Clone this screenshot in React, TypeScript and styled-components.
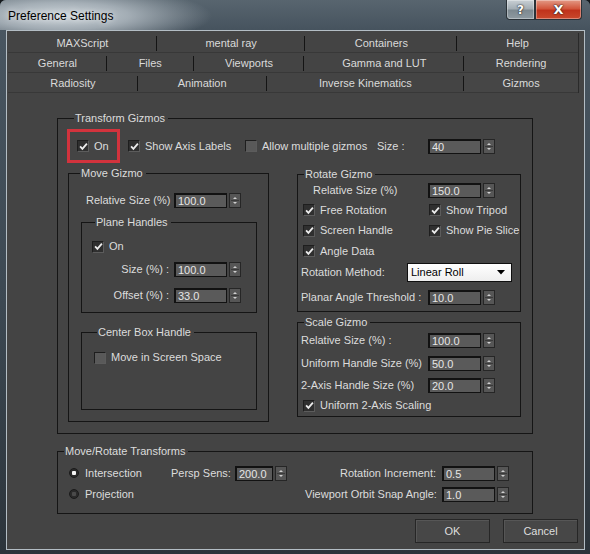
import React from "react";
import styled, { createGlobalStyle } from "styled-components";

const GlobalStyle = createGlobalStyle`
  html, body { margin: 0; padding: 0; background: #15191d; }
  body { font-family: "Liberation Sans", Arial, sans-serif; font-size: 11px; color: #dcdcdc; }
  * { box-sizing: border-box; }
`;

const Window = styled.div`
  width: 590px;
  height: 554px;
  display: flex;
  flex-direction: column;
  border-radius: 6px 6px 0 0;
  overflow: hidden;
  background: linear-gradient(180deg, #4a5762 0%, #3c4852 55%, #2c343b 100%);
`;

const TitleBar = styled.div`
  height: 30px;
  flex: none;
  display: flex;
  align-items: flex-start;
  background:
    radial-gradient(ellipse 150px 30px at 62px 16px, rgba(214, 221, 226, 0.95) 0%, rgba(190, 199, 206, 0.75) 45%, rgba(150, 160, 168, 0) 100%),
    linear-gradient(180deg, #58656f 0%, #46535e 100%);
`;

const Title = styled.div`
  padding: 9px 0 0 8px;
  font-size: 12px;
  line-height: 15px;
  color: #000;
  text-shadow: 0 0 6px rgba(255, 255, 255, 0.9);
`;

const Captions = styled.div`
  margin-left: auto;
  margin-right: 8px;
  display: flex;
`;

const CaptionButton = styled.div<{ $w: number; $close?: boolean }>`
  width: ${(p) => p.$w}px;
  height: 20px;
  display: flex;
  align-items: center;
  justify-content: center;
  border: 1px solid #2a3238;
  border-top: none;
  border-radius: ${(p) => (p.$close ? "0 0 4px 0" : "0 0 0 4px")};
  background: ${(p) =>
    p.$close
      ? "linear-gradient(180deg, #e39a86 0%, #d2573d 45%, #c0331c 55%, #c9492c 100%)"
      : "linear-gradient(180deg, #c9d0d5 0%, #a4aeb5 45%, #7d8990 55%, #8e9aa1 100%)"};
  box-shadow: inset 0 0 0 1px rgba(255, 255, 255, 0.35);
  font-family: "DejaVu Sans", sans-serif;
  font-weight: bold;
  font-size: ${(p) => (p.$close ? 13 : 12)}px;
  color: #fff;
  text-shadow: 0 0 2px #222, 0 0 1px #000;
`;

const Content = styled.div`
  flex: 1;
  margin: 0 5px 4px 6px;
  border: 1px solid #b3bdc4;
  background: #444444;
  display: flex;
  flex-direction: column;
`;

const Tabs = styled.div`
  width: 571px;
  margin: 2px 0 0 1px;
  border-right: 1px solid #2a2a2a;
`;

const TabRow = styled.div`
  display: flex;
  height: 20px;
  border-bottom: 1px solid #383838;
`;

const Tab = styled.div<{ $w: number; $last?: boolean; $active?: boolean }>`
  width: ${(p) => p.$w}px;
  display: flex;
  align-items: center;
  justify-content: center;
  color: #dadada;
  position: relative;
  background: ${(p) => (p.$active ? "#464646" : "#444444")};
  &::after {
    content: "";
    display: ${(p) => (p.$last ? "none" : "block")};
    position: absolute;
    right: 0;
    top: 3px;
    bottom: 1px;
    width: 1px;
    background: #141414;
  }
`;

const Panel = styled.div`
  flex: 1;
  padding: 25px 0 0 50px;
  display: flex;
  flex-direction: column;
`;

const Group = styled.div<{ $w?: number; $h?: number; $pl?: number; $pr?: number; $pb?: number; $mt?: number }>`
  border: 1px solid #151515;
  display: flex;
  flex-direction: column;
  ${(p) => (p.$w ? `width: ${p.$w}px;` : "")}
  ${(p) => (p.$h ? `height: ${p.$h}px;` : "")}
  padding: 0 ${(p) => p.$pr ?? 0}px ${(p) => p.$pb ?? 0}px ${(p) => p.$pl ?? 0}px;
  margin-top: ${(p) => p.$mt ?? 0}px;
`;

const GroupTitle = styled.div<{ $ml?: number }>`
  align-self: flex-start;
  margin: -7px 0 0 ${(p) => p.$ml ?? 6}px;
  padding: 0 3px 0 1px;
  line-height: 13px;
  height: 13px;
  background: #444444;
  color: #dcdcdc;
`;

const TopRow = styled.div`
  display: grid;
  grid-template-columns: 61px 117px 132px 51px auto;
  align-items: center;
  height: 34px;
  margin: 4px 0 0 -1px;
`;

const Highlight = styled.div`
  width: 53px;
  height: 34px;
  border: 3px solid #d2333d;
  display: flex;
  align-items: center;
  padding-left: 7px;
`;

const Columns = styled.div`
  display: grid;
  grid-template-columns: 201px 224px;
  column-gap: 28px;
  margin-top: 10px;
  align-items: start;
`;

const Stack = styled.div`
  display: flex;
  flex-direction: column;
`;

const Row = styled.div<{ $h?: number; $cols?: string; $pl?: number; $mt?: number }>`
  display: grid;
  grid-template-columns: ${(p) => p.$cols ?? "auto"};
  align-items: center;
  height: ${(p) => p.$h ?? 16}px;
  padding-left: ${(p) => p.$pl ?? 0}px;
  margin-top: ${(p) => p.$mt ?? 0}px;
`;

const Label = styled.span<{ $right?: boolean; $pr?: number; $pl?: number }>`
  white-space: nowrap;
  line-height: 13px;
  color: #dcdcdc;
  text-align: ${(p) => (p.$right ? "right" : "left")};
  padding-right: ${(p) => p.$pr ?? 0}px;
  padding-left: ${(p) => p.$pl ?? 0}px;
`;

const CheckItem = styled.label`
  display: inline-flex;
  align-items: center;
  gap: 5px;
  height: 13px;
  white-space: nowrap;
  line-height: 13px;
`;

const Box = styled.span<{ $on?: boolean }>`
  width: 12px;
  height: 12px;
  flex: none;
  display: flex;
  align-items: center;
  justify-content: center;
  border: 1px solid #1e1e1e;
  border-right-color: #5c5c5c;
  border-bottom-color: #5c5c5c;
  background: ${(p) => (p.$on ? "#2f2f2f" : "#595959")};
`;

const Check = ({ on, children }: { on?: boolean; children?: React.ReactNode }) => (
  <CheckItem>
    <Box $on={on}>
      {on && (
        <svg width="9" height="9" viewBox="0 0 9 9">
          <path d="M1.1 4.4 L3.4 6.9 L7.9 1.6" fill="none" stroke="#ececec" strokeWidth="1.8" />
        </svg>
      )}
    </Box>
    {children}
  </CheckItem>
);

const SpinWrap = styled.div`
  display: flex;
  align-items: center;
  gap: 2px;
`;

const Field = styled.div<{ $w: number }>`
  width: ${(p) => p.$w}px;
  height: 15px;
  background: #5a5a5a;
  border: 1px solid #121212;
  border-top-width: 2px;
  border-left-width: 2px;
  color: #e6e6e6;
  padding-left: 2px;
  line-height: 12px;
  font-size: 11px;
`;

const SpinBox = styled.div`
  width: 12px;
  height: 15px;
  background: #565656;
  border: 1px solid #262626;
  display: flex;
`;

const Spinner = ({ value, w = 53 }: { value: string; w?: number }) => (
  <SpinWrap>
    <Field $w={w}>{value}</Field>
    <SpinBox>
      <svg width="10" height="13" viewBox="0 0 10 13">
        <path d="M3 5 L5 3 L7 5 Z" fill="#d0d0d0" />
        <line x1="1" y1="6.5" x2="9" y2="6.5" stroke="#3a3a3a" strokeWidth="1" />
        <path d="M3 8 L5 10 L7 8 Z" fill="#d0d0d0" />
      </svg>
    </SpinBox>
  </SpinWrap>
);

const Dropdown = styled.div`
  width: 105px;
  height: 19px;
  border: 1px solid #101010;
  background: linear-gradient(180deg, #ffffff 0%, #eeeeee 100%);
  color: #000;
  display: flex;
  align-items: center;
  justify-content: space-between;
  padding: 0 6px 0 3px;
  font-size: 11px;
`;

const RadioItem = styled.label`
  display: inline-flex;
  align-items: center;
  gap: 6px;
  height: 13px;
  white-space: nowrap;
`;

const RadioDot = styled.span<{ $on?: boolean }>`
  width: 10px;
  height: 10px;
  border-radius: 50%;
  background: ${(p) =>
    p.$on
      ? "radial-gradient(circle, #f4f4f4 0 2px, #2a2a2a 2.5px)"
      : "radial-gradient(circle, #4a4a4a 0 2px, #2a2a2a 2.5px)"};
  border: 1px solid #1a1a1a;
`;

const Radio = ({ on, children }: { on?: boolean; children: React.ReactNode }) => (
  <RadioItem>
    <RadioDot $on={on} />
    {children}
  </RadioItem>
);

const TransformGrid = styled.div`
  display: grid;
  grid-template-columns: 102px 134px auto;
  grid-template-rows: 16px 16px;
  row-gap: 5px;
  align-items: center;
  margin-top: 7px;
`;

const Pair = styled.div<{ $cols: string }>`
  display: grid;
  grid-template-columns: ${(p) => p.$cols};
  align-items: center;
`;

const Buttons = styled.div`
  display: flex;
  justify-content: flex-end;
  gap: 13px;
  padding-right: 6px;
  margin-top: 5px;
`;

const Button = styled.div`
  width: 75px;
  height: 24px;
  display: flex;
  align-items: center;
  justify-content: center;
  background: #474747;
  border: 1px solid #262626;
  box-shadow: inset 1px 1px 0 #565656;
  color: #dedede;
`;

const rows = [
  [
    ["MAXScript", 149],
    ["mental ray", 149],
    ["Containers", 152],
    ["Help", 121],
  ],
  [
    ["General", 99],
    ["Files", 87],
    ["Viewports", 111],
    ["Gamma and LUT", 160],
    ["Rendering", 114],
  ],
  [
    ["Radiosity", 130],
    ["Animation", 129],
    ["Inverse Kinematics", 198],
    ["Gizmos", 114],
  ],
] as const;

export default function App() {
  return (
    <>
      <GlobalStyle />
      <Window>
        <TitleBar>
          <Title>Preference Settings</Title>
          <Captions>
            <CaptionButton $w={29}>?</CaptionButton>
            <CaptionButton $w={47} $close>
              X
            </CaptionButton>
          </Captions>
        </TitleBar>
        <Content>
          <Tabs>
            {rows.map((r, i) => (
              <TabRow key={i}>
                {r.map(([name, w], j) => (
                  <Tab key={name} $w={w} $last={j === r.length - 1} $active={name === "Gizmos"}>
                    {name}
                  </Tab>
                ))}
              </TabRow>
            ))}
          </Tabs>
          <Panel>
            <Group $w={476} $pl={10} $pr={11} $pb={11}>
              <GroupTitle $ml={6}>Transform Gizmos</GroupTitle>
              <TopRow>
                <Highlight>
                  <Check on>On</Check>
                </Highlight>
                <Check on>Show Axis Labels</Check>
                <Check>Allow multiple gizmos</Check>
                <Label>Size :</Label>
                <Spinner value="40" />
              </TopRow>
              <Columns>
                <Group $h={249} $pl={12} $pr={11}>
                  <GroupTitle $ml={-1}>Move Gizmo</GroupTitle>
                  <Row $mt={12} $cols="88px auto" $pl={5}>
                    <Label>Relative Size (%)</Label>
                    <Spinner value="100.0" />
                  </Row>
                  <Group $mt={14} $pl={10} $pb={9}>
                    <GroupTitle $ml={3}>Plane Handles</GroupTitle>
                    <Row $mt={11} $h={13}>
                      <Check on>On</Check>
                    </Row>
                    <Row $mt={8} $cols="82px auto">
                      <Label $right $pr={5}>Size (%) :</Label>
                      <Spinner value="100.0" />
                    </Row>
                    <Row $mt={10} $cols="82px auto">
                      <Label $right $pr={5}>Offset (%) :</Label>
                      <Spinner value="33.0" />
                    </Row>
                  </Group>
                  <Group $mt={19} $h={78} $pl={12}>
                    <GroupTitle $ml={3}>Center Box Handle</GroupTitle>
                    <Row $mt={12} $h={13}>
                      <Check>Move in Screen Space</Check>
                    </Row>
                  </Group>
                </Group>
                <Stack>
                  <Group $mt={1} $pl={3}>
                    <GroupTitle $ml={3}>Rotate Gizmo</GroupTitle>
                    <Row $h={19} $cols="127px auto">
                      <Label $pl={12}>Relative Size (%)</Label>
                      <Spinner value="150.0" />
                    </Row>
                    <Row $h={20} $cols="126px auto" $pl={2}>
                      <Check on>Free Rotation</Check>
                      <Check on>Show Tripod</Check>
                    </Row>
                    <Row $h={21} $cols="126px auto" $pl={2}>
                      <Check on>Screen Handle</Check>
                      <Check on>Show Pie Slice</Check>
                    </Row>
                    <Row $h={20} $pl={2}>
                      <Check on>Angle Data</Check>
                    </Row>
                    <Row $h={22} $cols="106px auto">
                      <Label>Rotation Method:</Label>
                      <Dropdown>
                        <span>Linear Roll</span>
                        <svg width="8" height="5" viewBox="0 0 8 5">
                          <path d="M0 0 L8 0 L4 4.5 Z" fill="#000" />
                        </svg>
                      </Dropdown>
                    </Row>
                    <Row $h={28} $cols="127px auto">
                      <Label>Planar Angle Threshold :</Label>
                      <Spinner value="10.0" />
                    </Row>
                  </Group>
                  <Group $mt={10} $pl={3}>
                    <GroupTitle $ml={3}>Scale Gizmo</GroupTitle>
                    <Row $h={22} $cols="127px auto">
                      <Label>Relative Size (%) :</Label>
                      <Spinner value="100.0" />
                    </Row>
                    <Row $h={25} $cols="127px auto">
                      <Label>Uniform Handle Size (%)</Label>
                      <Spinner value="50.0" />
                    </Row>
                    <Row $h={19} $cols="127px auto">
                      <Label>2-Axis Handle Size (%)</Label>
                      <Spinner value="20.0" />
                    </Row>
                    <Row $h={21} $pl={2}>
                      <Check on>Uniform 2-Axis Scaling</Check>
                    </Row>
                  </Group>
                </Stack>
              </Columns>
            </Group>
            <Group $w={476} $mt={17} $pl={11} $pb={11}>
              <GroupTitle $ml={-5}>Move/Rotate Transforms</GroupTitle>
              <TransformGrid>
                <Radio on>Intersection</Radio>
                <Pair $cols="64px auto">
                  <Label>Persp Sens:</Label>
                  <Spinner value="200.0" w={38} />
                </Pair>
                <Pair $cols="137px auto">
                  <Label $right $pr={6}>Rotation Increment:</Label>
                  <Spinner value="0.5" />
                </Pair>
                <Radio>Projection</Radio>
                <span />
                <Pair $cols="137px auto">
                  <Label $right $pr={6}>Viewport Orbit Snap Angle:</Label>
                  <Spinner value="1.0" />
                </Pair>
              </TransformGrid>
            </Group>
            <Buttons>
              <Button>OK</Button>
              <Button>Cancel</Button>
            </Buttons>
          </Panel>
        </Content>
      </Window>
    </>
  );
}
